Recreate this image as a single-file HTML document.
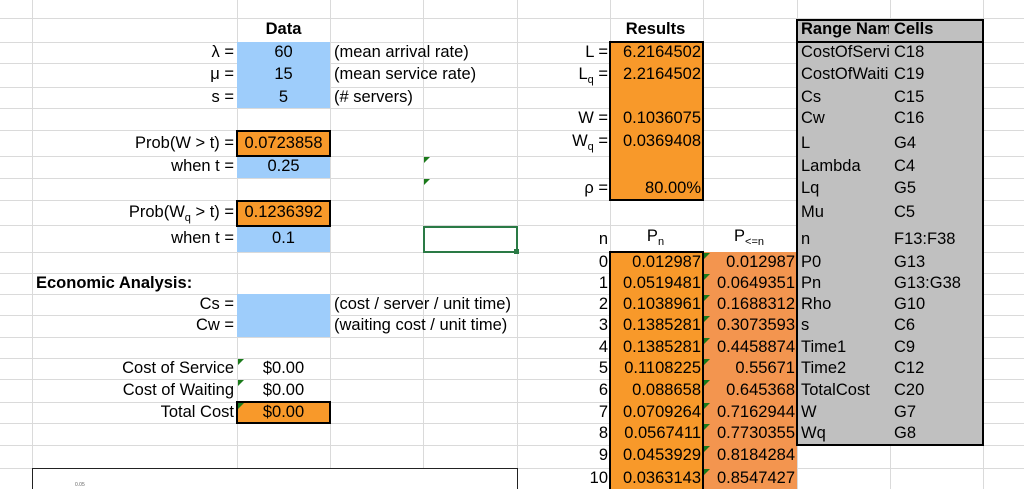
<!DOCTYPE html>
<html><head><meta charset="utf-8"><style>
*{margin:0;padding:0;box-sizing:border-box}
html,body{width:1024px;height:489px;overflow:hidden}
body{background:#fff;position:relative;font-family:"Liberation Sans",Arial,sans-serif;font-size:16.5px;line-height:19px;color:#000}
div{position:absolute}
.v{top:0;width:1px;height:489px;background:#dadada}
.h{left:0;width:1024px;height:1px;background:#dadada}
.r{text-align:right;white-space:nowrap}
.c{text-align:center;white-space:nowrap}
.l{text-align:left;white-space:nowrap}
.or{background:#f8992a}
.lo{background:#f3954f}
.bl{background:#9ecdfb}
.tri{width:0;height:0;border-top:6px solid #1a7a1a;border-right:6px solid transparent}
sub{font-size:11px;line-height:0;vertical-align:-4px}
.L{left:36px;width:198px}
.C{left:237px;width:93px}
.N{left:334px}
.F{left:520px;width:88px}
.G{left:610px;width:91px}
.H{left:703px;width:92px}
.I{left:801px;width:88px;overflow:hidden}
.J{left:894px}
</style></head><body>
<div class="v" style="left:32px"></div><div class="v" style="left:237px"></div><div class="v" style="left:330px"></div><div class="v" style="left:423px"></div><div class="v" style="left:517px"></div><div class="v" style="left:610px"></div><div class="v" style="left:703px"></div><div class="v" style="left:797px"></div><div class="v" style="left:890px"></div><div class="v" style="left:983px"></div>
<div class="h" style="top:18px"></div><div class="h" style="top:42px"></div><div class="h" style="top:63px"></div><div class="h" style="top:87px"></div><div class="h" style="top:108px"></div><div class="h" style="top:130px"></div><div class="h" style="top:156px"></div><div class="h" style="top:178px"></div><div class="h" style="top:200px"></div><div class="h" style="top:225px"></div><div class="h" style="top:252px"></div><div class="h" style="top:273px"></div><div class="h" style="top:294px"></div><div class="h" style="top:315px"></div><div class="h" style="top:337px"></div><div class="h" style="top:358px"></div><div class="h" style="top:379px"></div><div class="h" style="top:402px"></div><div class="h" style="top:423px"></div><div class="h" style="top:445px"></div><div class="h" style="top:468px"></div>

<div class="bl" style="left:237px;top:42px;width:93px;height:66px"></div>
<div class="bl" style="left:237px;top:156px;width:93px;height:22px"></div>
<div class="bl" style="left:237px;top:226px;width:93px;height:26px"></div>
<div class="bl" style="left:237px;top:294px;width:93px;height:43px"></div>
<div class="or" style="left:236px;top:130px;width:95px;height:27px;border:2px solid #000"></div>
<div class="or" style="left:236px;top:200px;width:95px;height:27px;border:2px solid #000"></div>
<div class="or" style="left:236px;top:401px;width:95px;height:23px;border:2px solid #000"></div>
<div class="or" style="left:609px;top:41px;width:95px;height:160px;border:2px solid #000"></div>
<div class="or" style="left:609px;top:251px;width:95px;height:240px;border:2px solid #000;border-bottom:none"></div>
<div class="lo" style="left:704px;top:252px;width:93px;height:237px"></div>
<div style="left:796px;top:19px;width:188px;height:427px;background:#c0c0c0;border:2px solid #000"></div>
<div style="left:796px;top:41px;width:188px;height:2px;background:#000"></div>
<div style="left:423px;top:226px;width:95px;height:27px;border:2px solid #2a7a45"></div>
<div style="left:514px;top:249px;width:5px;height:5px;background:#2a7a45"></div>
<div style="left:32px;top:468px;width:486px;height:40px;border:1.5px solid #222;background:#fff"></div>
<div style="left:75px;top:482px;font-size:5px;line-height:6px;color:#666">0.05</div>

<div class="tri" style="left:424px;top:157px"></div>
<div class="tri" style="left:424px;top:179px"></div>
<div class="tri" style="left:238px;top:359px"></div>
<div class="tri" style="left:238px;top:380px"></div>
<div class="tri" style="left:238px;top:403px"></div>
<div class="tri" style="left:704px;top:253px"></div><div class="tri" style="left:704px;top:274px"></div><div class="tri" style="left:704px;top:295px"></div><div class="tri" style="left:704px;top:316px"></div><div class="tri" style="left:704px;top:338px"></div><div class="tri" style="left:704px;top:359px"></div><div class="tri" style="left:704px;top:380px"></div><div class="tri" style="left:704px;top:403px"></div><div class="tri" style="left:704px;top:424px"></div><div class="tri" style="left:704px;top:446px"></div><div class="tri" style="left:704px;top:469px"></div>

<!-- row 1 -->
<div class="c C" style="top:20px;font-weight:bold">Data</div>
<div class="c G" style="top:20px;font-weight:bold">Results</div>
<div class="l I" style="top:20px;font-weight:bold">Range Nam</div>
<div class="l J" style="top:20px;font-weight:bold">Cells</div>
<!-- row 2 -->
<div class="r L" style="top:43px">λ =</div><div class="c C" style="top:43px">60</div><div class="l N" style="top:43px">(mean arrival rate)</div>
<div class="r F" style="top:43px">L =</div><div class="r G" style="top:43px">6.2164502</div>
<div class="l I" style="top:43px">CostOfServi</div><div class="l J" style="top:43px">C18</div>
<!-- row 3 -->
<div class="r L" style="top:65px">μ =</div><div class="c C" style="top:65px">15</div><div class="l N" style="top:65px">(mean service rate)</div>
<div class="r F" style="top:65px">L<sub>q</sub> =</div><div class="r G" style="top:65px">2.2164502</div>
<div class="l I" style="top:65px">CostOfWaiti</div><div class="l J" style="top:65px">C19</div>
<!-- row 4 -->
<div class="r L" style="top:88px">s =</div><div class="c C" style="top:88px">5</div><div class="l N" style="top:88px">(# servers)</div>
<div class="l I" style="top:88px">Cs</div><div class="l J" style="top:88px">C15</div>
<!-- row 5 -->
<div class="r F" style="top:109px">W =</div><div class="r G" style="top:109px">0.1036075</div>
<div class="l I" style="top:109px">Cw</div><div class="l J" style="top:109px">C16</div>
<!-- row 6 -->
<div class="r L" style="top:134px">Prob(W &gt; t) =</div><div class="c C" style="top:134px">0.0723858</div>
<div class="r F" style="top:132px">W<sub>q</sub> =</div><div class="r G" style="top:132px">0.0369408</div>
<div class="l I" style="top:134px">L</div><div class="l J" style="top:134px">G4</div>
<!-- row 7 -->
<div class="r L" style="top:157px">when t =</div><div class="c C" style="top:157px">0.25</div>
<div class="l I" style="top:157px">Lambda</div><div class="l J" style="top:157px">C4</div>
<!-- row 8 -->
<div class="r F" style="top:179px">ρ =</div><div class="r G" style="top:179px">80.00%</div>
<div class="l I" style="top:179px">Lq</div><div class="l J" style="top:179px">G5</div>
<!-- row 9 -->
<div class="r L" style="top:203px">Prob(W<sub>q</sub> &gt; t) =</div><div class="c C" style="top:203px">0.1236392</div>
<div class="l I" style="top:203px">Mu</div><div class="l J" style="top:203px">C5</div>
<!-- row 10 -->
<div class="r L" style="top:229px">when t =</div><div class="c C" style="top:229px">0.1</div>
<div class="r F" style="top:230px">n</div><div class="c G" style="top:227px">P<sub>n</sub></div><div class="c H" style="top:227px">P<sub>&lt;=n</sub></div>
<div class="l I" style="top:230px">n</div><div class="l J" style="top:230px">F13:F38</div>
<!-- lower rows -->
<div class="l" style="left:36px;top:274px;font-weight:bold">Economic Analysis:</div>
<div class="r L" style="top:295px">Cs =</div><div class="l N" style="top:295px">(cost / server / unit time)</div>
<div class="r L" style="top:316px">Cw =</div><div class="l N" style="top:316px">(waiting cost / unit time)</div>
<div class="r L" style="top:359px">Cost of Service</div><div class="c C" style="top:359px">$0.00</div>
<div class="r L" style="top:381px">Cost of Waiting</div><div class="c C" style="top:381px">$0.00</div>
<div class="r L" style="top:403px">Total Cost</div><div class="c C" style="top:403px">$0.00</div>

<div class="r F" style="top:253px">0</div><div class="r G" style="top:253px">0.012987</div><div class="r H" style="top:253px">0.012987</div><div class="l I" style="top:253px">P0</div><div class="l J" style="top:253px">G13</div>
<div class="r F" style="top:274px">1</div><div class="r G" style="top:274px">0.0519481</div><div class="r H" style="top:274px">0.0649351</div><div class="l I" style="top:274px">Pn</div><div class="l J" style="top:274px">G13:G38</div>
<div class="r F" style="top:295px">2</div><div class="r G" style="top:295px">0.1038961</div><div class="r H" style="top:295px">0.1688312</div><div class="l I" style="top:295px">Rho</div><div class="l J" style="top:295px">G10</div>
<div class="r F" style="top:316px">3</div><div class="r G" style="top:316px">0.1385281</div><div class="r H" style="top:316px">0.3073593</div><div class="l I" style="top:316px">s</div><div class="l J" style="top:316px">C6</div>
<div class="r F" style="top:338px">4</div><div class="r G" style="top:338px">0.1385281</div><div class="r H" style="top:338px">0.4458874</div><div class="l I" style="top:338px">Time1</div><div class="l J" style="top:338px">C9</div>
<div class="r F" style="top:359px">5</div><div class="r G" style="top:359px">0.1108225</div><div class="r H" style="top:359px">0.55671</div><div class="l I" style="top:359px">Time2</div><div class="l J" style="top:359px">C12</div>
<div class="r F" style="top:381px">6</div><div class="r G" style="top:381px">0.088658</div><div class="r H" style="top:381px">0.645368</div><div class="l I" style="top:381px">TotalCost</div><div class="l J" style="top:381px">C20</div>
<div class="r F" style="top:403px">7</div><div class="r G" style="top:403px">0.0709264</div><div class="r H" style="top:403px">0.7162944</div><div class="l I" style="top:403px">W</div><div class="l J" style="top:403px">G7</div>
<div class="r F" style="top:424px">8</div><div class="r G" style="top:424px">0.0567411</div><div class="r H" style="top:424px">0.7730355</div><div class="l I" style="top:424px">Wq</div><div class="l J" style="top:424px">G8</div>
<div class="r F" style="top:446px">9</div><div class="r G" style="top:446px">0.0453929</div><div class="r H" style="top:446px">0.8184284</div>
<div class="r F" style="top:469px">10</div><div class="r G" style="top:469px">0.0363143</div><div class="r H" style="top:469px">0.8547427</div>
</body></html>
